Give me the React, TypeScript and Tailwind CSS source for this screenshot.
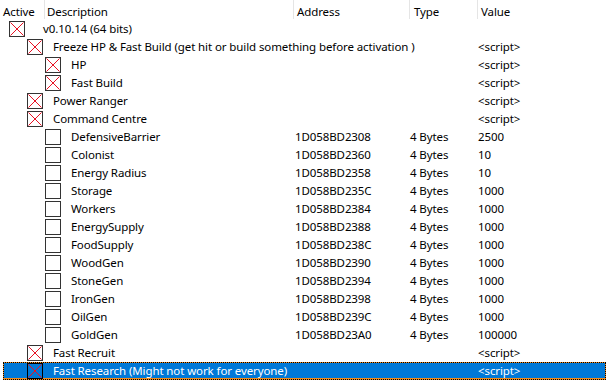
import React from "react";

type Row = {
  level: number;
  desc: string;
  checked: boolean;
  address?: string;
  type?: string;
  value: string;
  selected?: boolean;
};

const rows: Row[] = [
  { level: 0, desc: "v0.10.14 (64 bits)", checked: true, value: "" },
  {
    level: 1,
    desc: "Freeze HP & Fast Build (get hit or build something before activation )",
    checked: true,
    value: "<script>",
  },
  { level: 2, desc: "HP", checked: true, value: "<script>" },
  { level: 2, desc: "Fast Build", checked: true, value: "<script>" },
  { level: 1, desc: "Power Ranger", checked: true, value: "<script>" },
  { level: 1, desc: "Command Centre", checked: true, value: "<script>" },
  { level: 2, desc: "DefensiveBarrier", checked: false, address: "1D058BD2308", type: "4 Bytes", value: "2500" },
  { level: 2, desc: "Colonist", checked: false, address: "1D058BD2360", type: "4 Bytes", value: "10" },
  { level: 2, desc: "Energy Radius", checked: false, address: "1D058BD2358", type: "4 Bytes", value: "10" },
  { level: 2, desc: "Storage", checked: false, address: "1D058BD235C", type: "4 Bytes", value: "1000" },
  { level: 2, desc: "Workers", checked: false, address: "1D058BD2384", type: "4 Bytes", value: "1000" },
  { level: 2, desc: "EnergySupply", checked: false, address: "1D058BD2388", type: "4 Bytes", value: "1000" },
  { level: 2, desc: "FoodSupply", checked: false, address: "1D058BD238C", type: "4 Bytes", value: "1000" },
  { level: 2, desc: "WoodGen", checked: false, address: "1D058BD2390", type: "4 Bytes", value: "1000" },
  { level: 2, desc: "StoneGen", checked: false, address: "1D058BD2394", type: "4 Bytes", value: "1000" },
  { level: 2, desc: "IronGen", checked: false, address: "1D058BD2398", type: "4 Bytes", value: "1000" },
  { level: 2, desc: "OilGen", checked: false, address: "1D058BD239C", type: "4 Bytes", value: "1000" },
  { level: 2, desc: "GoldGen", checked: false, address: "1D058BD23A0", type: "4 Bytes", value: "100000" },
  { level: 1, desc: "Fast Recruit", checked: true, value: "<script>" },
  { level: 1, desc: "Fast Research (Might not work for everyone)", checked: true, value: "<script>", selected: true },
];

function Box({ checked, selected }: { checked: boolean; selected?: boolean }) {
  return (
    <svg width="16" height="16" viewBox="0 0 16 16" className="shrink-0">
      <rect
        x="0.5"
        y="0.5"
        width="15"
        height="15"
        fill={selected ? "none" : "#ffffff"}
        stroke={selected ? "#000000" : "#333333"}
      />
      {checked && (
        <g stroke="#e81123" strokeWidth="1">
          <line x1="1.5" y1="1.5" x2="14.5" y2="14.5" />
          <line x1="14.5" y1="1.5" x2="1.5" y2="14.5" />
        </g>
      )}
    </svg>
  );
}

const boxLeft = ["ml-[9px]", "ml-[27px]", "ml-[45px]"];
const textGap = ["ml-[18px]", "ml-[10px]", "ml-[10px]"];

function Line({ row }: { row: Row }) {
  const inner = (
    <div className={`flex h-[18px] items-center ${row.selected ? "-ml-[4px] -mt-px text-white" : "text-black"}`}>
      <div className="flex w-[295px] shrink-0 items-center whitespace-nowrap">
        <div className={boxLeft[row.level]}>
          <Box checked={row.checked} selected={row.selected} />
        </div>
        <span className={textGap[row.level]}>{row.desc}</span>
      </div>
      <div className="w-[115px] shrink-0">{row.address}</div>
      <div className="w-[68px] shrink-0">{row.type}</div>
      <div className="whitespace-nowrap">{row.value}</div>
    </div>
  );

  if (row.selected) {
    return (
      <div className="ml-[3px] h-[18px] overflow-hidden border border-dotted border-black bg-[#f08a1c]">
        <div className="h-full bg-[#0078d7]">{inner}</div>
      </div>
    );
  }
  return <div className="h-[18px]">{inner}</div>;
}

export default function App() {
  return (
    <div
      className="h-[390px] w-[606px] overflow-hidden bg-white text-[11.5px] leading-none tracking-[-0.1px]"
      style={{ fontFamily: '"Noto Sans", "Open Sans", sans-serif' }}
    >
      <div className="flex h-[20px] text-black">
        <div className="w-[44px] shrink-0 pl-[3px] pt-[6px]">Active</div>
        <div className="h-[19px] w-px bg-[#e5e5e5]" />
        <div className="w-[248px] shrink-0 pl-[2px] pt-[6px]">Description</div>
        <div className="h-[19px] w-px bg-[#e5e5e5]" />
        <div className="w-[115px] shrink-0 pl-[3px] pt-[6px]">Address</div>
        <div className="h-[19px] w-px bg-[#e5e5e5]" />
        <div className="w-[67px] shrink-0 pl-[4px] pt-[6px]">Type</div>
        <div className="h-[19px] w-px bg-[#e5e5e5]" />
        <div className="pl-[3px] pt-[6px]">Value</div>
      </div>
      {rows.map((r, i) => (
        <Line key={i} row={r} />
      ))}
    </div>
  );
}
